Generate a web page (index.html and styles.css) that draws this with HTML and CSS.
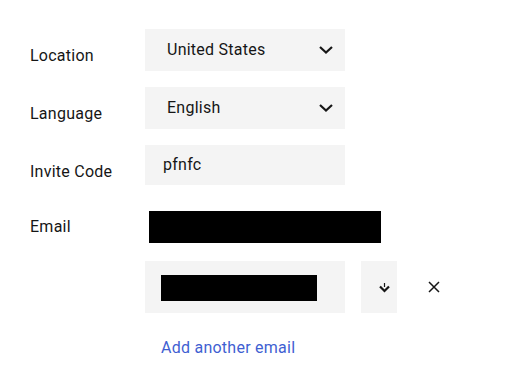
FILE: index.html
```html
<!DOCTYPE html>
<html>
<head>
<meta charset="utf-8">
<link rel="stylesheet" href="styles.css">
</head>
<body>
<form class="form">
  <div class="row">
    <label class="label">Location</label>
    <div class="select">
      <span class="value">United States</span>
      <svg class="chev" width="14" height="8" viewBox="0 0 14 8"><path d="M1 1 L7 6.5 L13 1" fill="none" stroke="#161616" stroke-width="2.2"/></svg>
    </div>
  </div>
  <div class="row">
    <label class="label">Language</label>
    <div class="select">
      <span class="value">English</span>
      <svg class="chev" width="14" height="8" viewBox="0 0 14 8"><path d="M1 1 L7 6.5 L13 1" fill="none" stroke="#161616" stroke-width="2.2"/></svg>
    </div>
  </div>
  <div class="row">
    <label class="label">Invite Code</label>
    <div class="input short"><span class="code">pfnfc</span></div>
  </div>
  <div class="row email-row">
    <label class="label email-label">Email</label>
    <div class="redact-main"></div>
  </div>
  <div class="row extra-row">
    <div></div>
    <div class="extra">
      <div class="input tall"><div class="redact"></div></div>
      <div class="mini">
        <svg width="11" height="10" viewBox="0 0 11 10"><path d="M5.5 0 V4" stroke="#161616" stroke-width="1.2"/><path d="M1 3.5 L5.5 8 L10 3.5" fill="none" stroke="#161616" stroke-width="2.2"/></svg>
      </div>
      <button type="button" class="remove">
        <svg width="12" height="12" viewBox="0 0 12 12"><path d="M1 1 L11 11 M11 1 L1 11" stroke="#161616" stroke-width="1.5"/></svg>
      </button>
    </div>
  </div>
  <div class="row link-row">
    <div></div>
    <a class="add" href="#">Add another email</a>
  </div>
</form>
</body>
</html>
```

FILE: styles.css
```css
html, body {
  margin: 0;
  padding: 0;
  background: #ffffff;
}
body {
  font-family: Roboto, "Liberation Sans", sans-serif;
  font-size: 16px;
  letter-spacing: 0.25px;
  color: #161616;
}
.form {
  padding: 29px 0 0 30px;
  display: flex;
  flex-direction: column;
  gap: 16px;
}
.row {
  display: grid;
  grid-template-columns: 115px auto;
  align-items: start;
}
.label {
  line-height: 24px;
  padding-top: 15px;
}
.select, .input {
  width: 200px;
  height: 42px;
  background: #f4f4f4;
  box-sizing: border-box;
  display: flex;
  align-items: center;
  justify-content: space-between;
}
.select {
  padding: 0 12px 0 22px;
}
.value {
  line-height: 42px;
}
.chev {
  display: block;
}
.input {
  padding: 0 18px;
}
.input.short {
  height: 40px;
  margin-bottom: 2px;
}
.code {
  line-height: 40px;
}
.email-row {
  height: 42px;
}
.email-label {
  padding-top: 12px;
}
.redact-main {
  margin: 8px 0 0 4px;
  width: 232px;
  height: 32px;
  background: #000;
}
.extra {
  display: flex;
  align-items: center;
}
.input.tall {
  height: 52px;
  padding: 0 16px;
  justify-content: flex-start;
}
.redact {
  width: 156px;
  height: 26px;
  background: #000;
  margin-top: 2px;
}
.mini {
  width: 36px;
  height: 52px;
  margin-left: 16px;
  background: #f4f4f4;
  box-sizing: border-box;
  padding-left: 18px;
  display: flex;
  align-items: center;
}
.mini svg {
  display: block;
  margin-top: 2px;
}
.remove {
  margin-left: 31px;
  padding: 0;
  border: 0;
  background: none;
  width: 12px;
  height: 12px;
}
.remove svg {
  display: block;
}
.link-row {
  padding-top: 7px;
}
.add {
  grid-column: 2;
  margin-left: 16px;
  color: #3f5fd2;
  text-decoration: none;
  line-height: 24px;
}
```
